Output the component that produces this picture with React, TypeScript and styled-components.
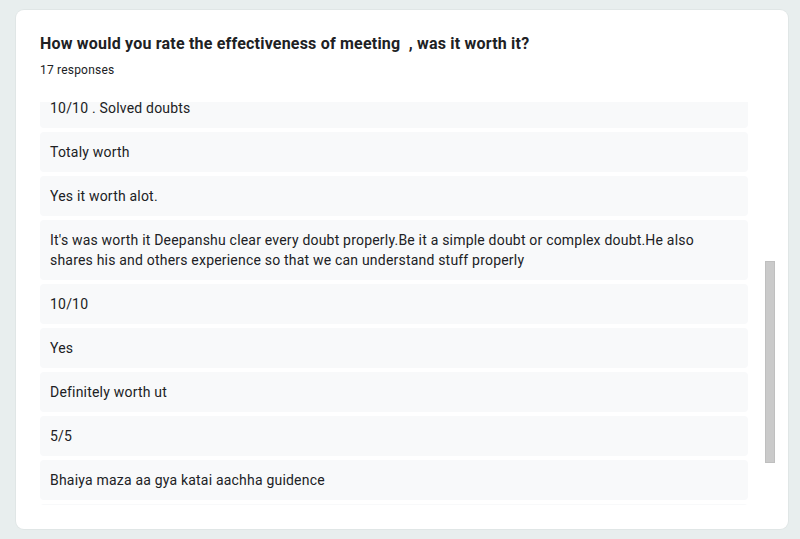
import React, { useEffect, useRef, useState } from "react";
import styled, { createGlobalStyle } from "styled-components";

const responses: string[] = [
  "Very helpful session",
  "Yes, it was worth it. All the topics were explained in a very simple way and every question was answered patiently by him",
  "Worth it",
  "Good",
  "Great session, cleared a lot of confusion about placements and the preparation strategy that we should follow from now on",
  "Yes",
  "10/10 . Solved doubts",
  "Totaly worth",
  "Yes it worth alot.",
  "It's was worth it Deepanshu clear every doubt properly.Be it a simple doubt or complex doubt.He also shares his and others experience so that we can understand stuff properly",
  "10/10",
  "Yes",
  "Definitely worth ut",
  "5/5",
  "Bhaiya maza aa gya katai aachha guidence",
  "Very good",
  "Yes it was worth it",
];

const FIRST_VISIBLE = 6;

interface IThumb {
  top: number;
  height: number;
}

const App: React.FC = () => {
  const listRef = useRef<HTMLDivElement>(null);
  const itemRef = useRef<HTMLDivElement>(null);
  const [thumb, setThumb] = useState<IThumb>({ top: 0, height: 0 });

  const updateThumb = () => {
    const el = listRef.current;
    if (!el) return;
    const ratio = el.clientHeight / el.scrollHeight;
    setThumb({ top: el.scrollTop * ratio, height: el.clientHeight * ratio });
  };

  useEffect(() => {
    if (listRef.current && itemRef.current) {
      listRef.current.scrollTop = itemRef.current.offsetTop + 14;
    }
    updateThumb();
  }, []);

  return (
    <>
      <GlobalStyle />
      <Page>
        <Card>
          <Title>How would you rate the effectiveness of meeting&nbsp; , was it worth it?</Title>
          <Count>17 responses</Count>
          <ListWrap>
            <List ref={listRef} onScroll={updateThumb}>
              {responses.map((text, i) => (
                <Item key={i} ref={i === FIRST_VISIBLE ? itemRef : undefined}>
                  {text}
                </Item>
              ))}
            </List>
            <Thumb style={{ top: thumb.top, height: thumb.height }} />
          </ListWrap>
        </Card>
      </Page>
    </>
  );
};

const GlobalStyle = createGlobalStyle`
  * {
    box-sizing: border-box;
  }
  html, body {
    margin: 0;
    padding: 0;
    background: #e8eeee;
    font-family: Roboto, "Liberation Sans", Arial, sans-serif;
    letter-spacing: 0.2px;
  }
`;

const Page = styled.div`
  width: 800px;
  height: 539px;
  padding: 10px 12px 10px 16px;
`;

const Card = styled.div`
  height: 519px;
  background: #fff;
  border-radius: 8px;
  box-shadow: 0 0 0 1px rgba(0, 0, 0, 0.03);
  padding: 22px 12px 24px 24px;
  display: flex;
  flex-direction: column;
`;

const Title = styled.h2`
  margin: 0;
  font-size: 16px;
  line-height: 24px;
  font-weight: 700;
  color: #202124;
`;

const Count = styled.div`
  margin-top: 6px;
  font-size: 12px;
  line-height: 16px;
  color: #202124;
`;

const ListWrap = styled.div`
  position: relative;
  margin-top: 24px;
  height: 403px;
`;

const List = styled.div`
  position: relative;
  height: 100%;
  overflow-y: scroll;
  padding-right: 28px;
  display: flex;
  flex-direction: column;
  gap: 4px;
  scrollbar-width: none;

  &::-webkit-scrollbar {
    display: none;
  }
`;

const Thumb = styled.div`
  position: absolute;
  right: 1px;
  width: 10px;
  background: #cacaca;
  border: 1px solid #bfbfbf;
`;

const Item = styled.div`
  flex-shrink: 0;
  background: #f8f9fa;
  border-radius: 4px;
  padding: 10px;
  font-size: 14px;
  line-height: 20px;
  color: #202124;
`;

export default App;
